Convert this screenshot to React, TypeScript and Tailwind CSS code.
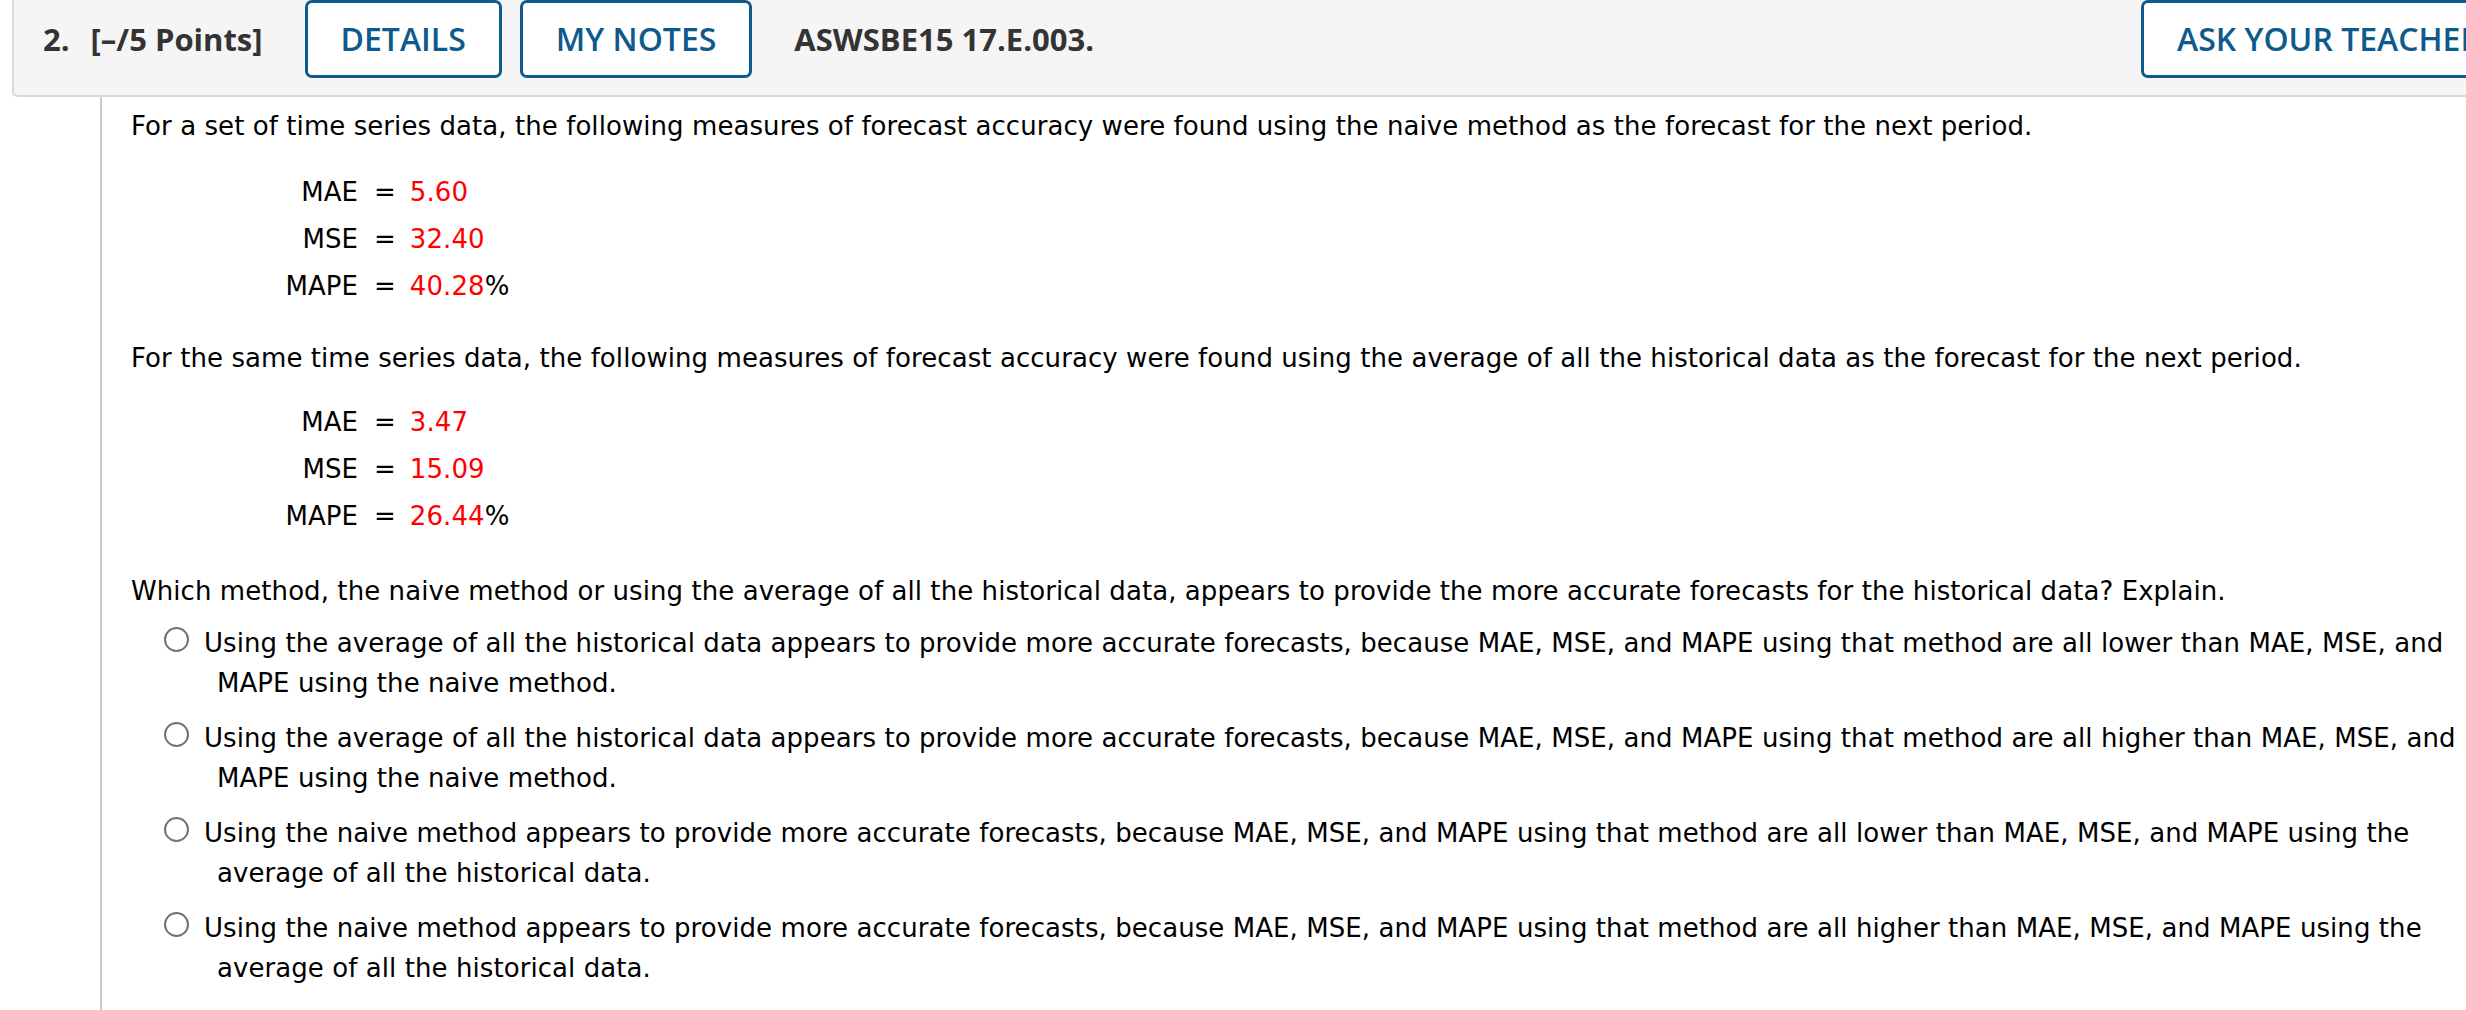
import React from 'react';

const naive = [
  { label: 'MAE', value: '5.60' },
  { label: 'MSE', value: '32.40' },
  { label: 'MAPE', value: '40.28', pct: true },
];

const average = [
  { label: 'MAE', value: '3.47' },
  { label: 'MSE', value: '15.09' },
  { label: 'MAPE', value: '26.44', pct: true },
];

const choices = [
  'Using the average of all the historical data appears to provide more accurate forecasts, because MAE, MSE, and MAPE using that method are all lower than MAE, MSE, and MAPE using the naive method.',
  'Using the average of all the historical data appears to provide more accurate forecasts, because MAE, MSE, and MAPE using that method are all higher than MAE, MSE, and MAPE using the naive method.',
  'Using the naive method appears to provide more accurate forecasts, because MAE, MSE, and MAPE using that method are all lower than MAE, MSE, and MAPE using the average of all the historical data.',
  'Using the naive method appears to provide more accurate forecasts, because MAE, MSE, and MAPE using that method are all higher than MAE, MSE, and MAPE using the average of all the historical data.',
];

function HeaderButton({ children, className = '' }: { children: React.ReactNode; className?: string }) {
  return (
    <button
      type="button"
      className={`h-[78px] shrink-0 rounded-[7px] border-[3px] border-[#0e5a8c] bg-white px-[33px] text-[32px] font-semibold text-[#0e5a8c] ${className}`}
    >
      {children}
    </button>
  );
}

function Measures({ rows }: { rows: { label: string; value: string; pct?: boolean }[] }) {
  return (
    <div>
      {rows.map((r) => (
        <div key={r.label} className="flex h-[47px] items-center leading-[47px] whitespace-nowrap">
          <span className="w-[227px] text-right">{r.label}</span>
          <span className="ml-[16px]">=</span>
          <span className="ml-[14px]">
            <span className="text-[#ff0000]">{r.value}</span>
            {r.pct && '%'}
          </span>
        </div>
      ))}
    </div>
  );
}

export default function App() {
  return (
    <div className="min-h-[1010px] w-full overflow-hidden bg-white">
      {/* question header */}
      <div
        className="ml-[12px] flex w-[2550px] items-center rounded-bl-[5px] border-b-2 border-l-2 border-[#d9d9d9] bg-[#f5f5f5] pb-[17px] pl-[29px] pr-[41px] text-[#333333]"
        style={{ fontFamily: '"Open Sans", "Noto Sans", sans-serif' }}
      >
        <div className="flex h-[78px] items-center text-[31px] font-bold">
          <span>2.</span>
          <span className="ml-[21px]">[–/5 Points]</span>
        </div>
        <HeaderButton className="ml-[42px]">DETAILS</HeaderButton>
        <HeaderButton className="ml-[18px]">MY NOTES</HeaderButton>
        <span className="ml-[42px] text-[31px] font-bold">ASWSBE15 17.E.003.</span>
        <HeaderButton className="ml-auto w-[380px] text-left whitespace-nowrap">ASK YOUR TEACHER</HeaderButton>
      </div>

      {/* question body */}
      <div
        className="ml-[100px] min-h-[913px] border-l-2 border-[#c9c9c9] pl-[29px] pt-[9px] text-[26px] leading-[40px] tracking-[0.07px] text-black"
        style={{ fontFamily: '"DejaVu Sans", Verdana, sans-serif' }}
      >
        <div className="w-[2340px]">
          <p>
            For a set of time series data, the following measures of forecast accuracy were found using the naive method as the forecast for the next period.
          </p>
          <div className="mt-[23px]">
            <Measures rows={naive} />
          </div>
          <p className="mt-[28px]">
            For the same time series data, the following measures of forecast accuracy were found using the average of all the historical data as the forecast for the next period.
          </p>
          <div className="mt-[21px]">
            <Measures rows={average} />
          </div>
          <p className="mt-[31px]">
            Which method, the naive method or using the average of all the historical data, appears to provide the more accurate forecasts for the historical data? Explain.
          </p>
          <div className="mt-[12px] flex flex-col gap-[15px] pl-[33px]">
            {choices.map((c) => (
              <label key={c} className="block pl-[53px] -indent-[53px]">
                <span className="mr-[15px] inline-block h-[25px] w-[25px] rounded-full border-2 border-[#727272] bg-white" />
                {c}
              </label>
            ))}
          </div>
        </div>
      </div>
    </div>
  );
}
